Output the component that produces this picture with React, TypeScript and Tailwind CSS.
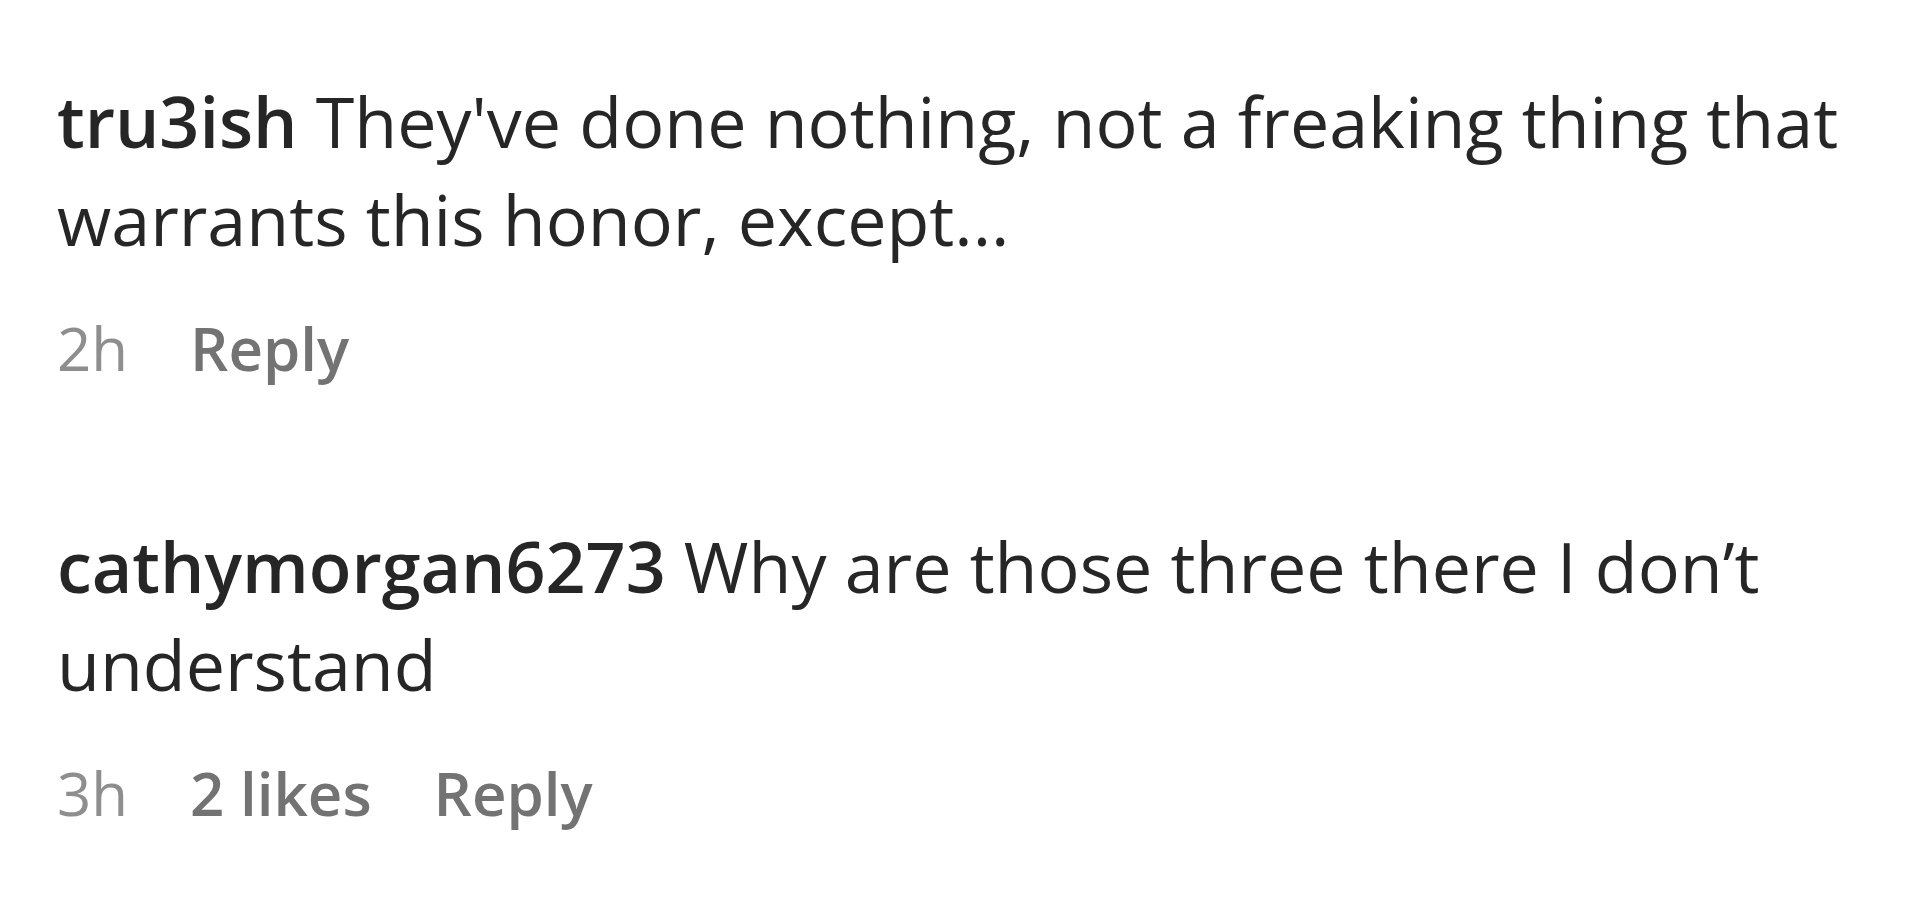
const comments = [
  {
    user: "tru3ish",
    text: "They've done nothing, not a freaking thing that warrants this honor, except...",
    time: "2h",
    likes: "",
  },
  {
    user: "cathymorgan6273",
    text: "Why are those three there I don\u2019t understand",
    time: "3h",
    likes: "2 likes",
  },
];

function Comment({ user, text, time, likes }: (typeof comments)[number]) {
  return (
    <div className="flex flex-col">
      <p className="text-[70px] leading-[98px] text-[#262626]">
        <span className="font-semibold">{user}</span> {text}
      </p>
      <div className="mt-[40px] flex items-center gap-[62px] text-[60px] leading-[80px]">
        <span className="text-[#8e8e8e]">{time}</span>
        {likes && <span className="font-semibold text-[#737373]">{likes}</span>}
        <span className="font-semibold text-[#737373]">Reply</span>
      </div>
    </div>
  );
}

export default function App() {
  return (
    <div
      className="flex h-[901px] w-[1920px] flex-col gap-[129px] overflow-hidden bg-white pl-[57px] pr-[30px] pt-[72px]"
      style={{ fontFamily: '"Open Sans", "Noto Sans", sans-serif' }}
    >
      {comments.map((c) => (
        <Comment key={c.user} {...c} />
      ))}
    </div>
  );
}
